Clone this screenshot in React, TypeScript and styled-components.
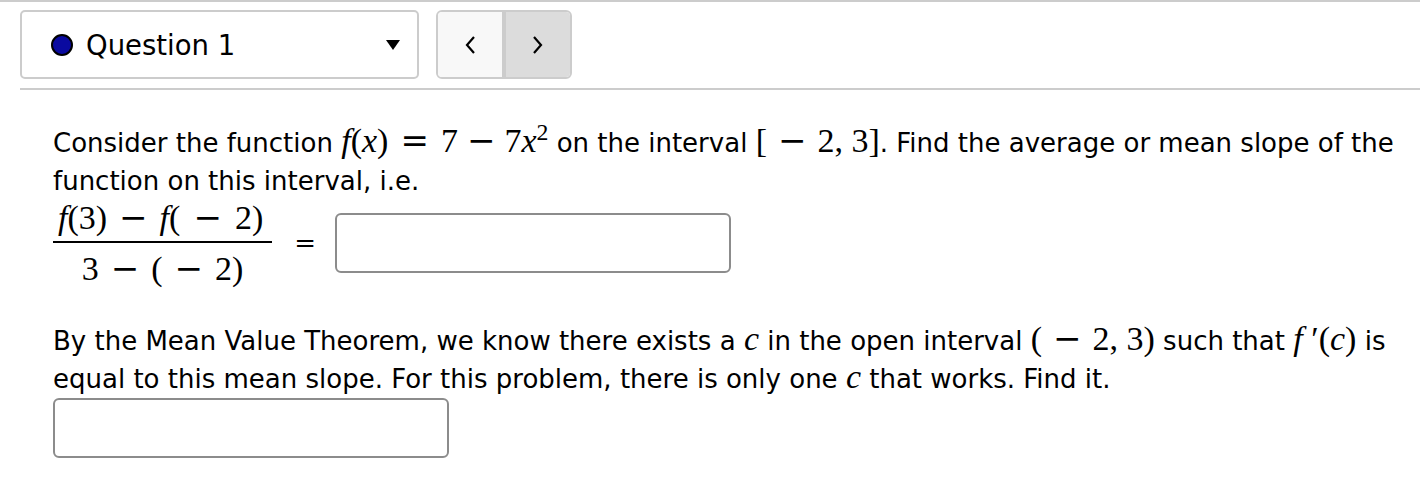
import styled, { createGlobalStyle } from 'styled-components';

const Global = createGlobalStyle`
  html, body {
    margin: 0;
    padding: 0;
    background: #fff;
  }
  body {
    font-family: "DejaVu Sans", "Liberation Sans", sans-serif;
    color: #000;
  }
`;

const Page = styled.div`
  width: 1420px;
  border-top: 2px solid #cccccc;
`;

const Header = styled.div`
  display: flex;
  align-items: stretch;
  gap: 17px;
  margin: 8px 0 0 20px;
  height: 69px;
`;

const Select = styled.div`
  box-sizing: border-box;
  width: 399px;
  border: 2px solid #cccccc;
  border-radius: 5px;
  display: flex;
  align-items: center;
  padding: 0 0 0 29px;
  font-size: 27.5px;
`;

const Dot = styled.span`
  box-sizing: border-box;
  width: 22px;
  height: 22px;
  border-radius: 50%;
  background: #0a0aa0;
  border: 2px solid #000;
  margin-right: 13px;
`;

const Caret = styled.span`
  margin-left: auto;
  margin-right: 17px;
  width: 0;
  height: 0;
  border-left: 7px solid transparent;
  border-right: 7px solid transparent;
  border-top: 10px solid #000;
`;

const Nav = styled.div`
  box-sizing: border-box;
  width: 136px;
  display: flex;
  border: 2px solid #cccccc;
  border-radius: 6px;
  overflow: hidden;
`;

const NavButton = styled.button<{ $dark?: boolean }>`
  flex: 1;
  border: 0;
  border-left: ${(p) => (p.$dark ? '4px solid #cccccc' : '0')};
  background: ${(p) => (p.$dark ? '#dcdcdc' : '#f8f8f8')};
  display: flex;
  align-items: center;
  justify-content: center;
  padding: 0;
`;

const Rule = styled.div`
  margin: 9px 0 0 20px;
  border-top: 2px solid #cccccc;
`;

const Body = styled.div`
  padding: 34px 0 0 53px;
  font-size: 26px;
  line-height: 38px;
`;

const Para = styled.p`
  margin: 0;
  width: 1365px;
`;

const M = styled.span`
  font-family: "Liberation Serif", "DejaVu Serif", serif;
  font-size: 34px;
  line-height: 20px;
`;

const I = styled.span`
  font-style: italic;
`;

const Op = styled.span<{ $gap?: number }>`
  font-family: "DejaVu Serif", serif;
  font-style: normal;
  margin: 0 ${(p) => p.$gap ?? 9}px;
`;

const Sup = styled.sup`
  font-size: 0.7em;
  line-height: 0;
`;

const Row = styled.div`
  display: flex;
  align-items: center;
`;

const Fraction = styled.span`
  display: inline-flex;
  flex-direction: column;
  align-items: center;
  font-family: "Liberation Serif", "DejaVu Serif", serif;
  font-size: 34px;
  line-height: 34px;
`;

const Numer = styled.span`
  padding: 0 9px 6px 5px;
  border-bottom: 2px solid #000;
`;

const Denom = styled.span`
  padding-top: 8px;
`;

const Equals = styled.span`
  font-family: "DejaVu Serif", serif;
  font-size: 26px;
  margin: 0 19px 0 22px;
`;

const Answer = styled.input`
  box-sizing: border-box;
  width: 396px;
  height: 60px;
  border: 2px solid #8c8c8c;
  border-radius: 6px;
  display: block;
  font-size: 20px;
`;

const Second = styled(Para)`
  margin-top: 36px;
`;

const Chevron = ({ left }: { left?: boolean }) => (
  <svg width="12" height="20" viewBox="0 0 12 20">
    <path
      d={left ? 'M10 2 L3 10 L10 18' : 'M2 2 L9 10 L2 18'}
      fill="none"
      stroke="#000"
      strokeWidth="2.2"
    />
  </svg>
);

export default function App() {
  return (
    <Page>
      <Global />
      <Header>
        <Select>
          <Dot />
          Question 1
          <Caret />
        </Select>
        <Nav>
          <NavButton>
            <Chevron left />
          </NavButton>
          <NavButton $dark>
            <Chevron />
          </NavButton>
        </Nav>
      </Header>
      <Rule />
      <Body>
        <Para>
          Consider the function{' '}
          <M>
            <I>f</I>(<I>x</I>)<Op $gap={12}>=</Op>7<Op>−</Op>7<I>x</I>
            <Sup>2</Sup>
          </M>{' '}
          on the interval{' '}
          <M>
            [<Op $gap={11}>−</Op>2, 3]
          </M>
          . Find the average or mean slope of the function on this interval, i.e.
        </Para>
        <Row>
          <Fraction>
            <Numer>
              <I>f</I>(3)<Op $gap={12}>−</Op>
              <I>f</I>(<Op $gap={13}>−</Op>2)
            </Numer>
            <Denom>
              3<Op $gap={12}>−</Op>(<Op $gap={12}>−</Op>2)
            </Denom>
          </Fraction>
          <Equals>=</Equals>
          <Answer type="text" />
        </Row>
        <Second>
          By the Mean Value Theorem, we know there exists a{' '}
          <M>
            <I>c</I>
          </M>{' '}
          in the open interval{' '}
          <M>
            (<Op $gap={11}>−</Op>2, 3)
          </M>{' '}
          such that{' '}
          <M>
            <I>f</I> ′(<I>c</I>)
          </M>{' '}
          is equal to this mean slope. For this problem, there is only one{' '}
          <M>
            <I>c</I>
          </M>{' '}
          that works. Find it.
        </Second>
        <Answer type="text" />
      </Body>
    </Page>
  );
}
